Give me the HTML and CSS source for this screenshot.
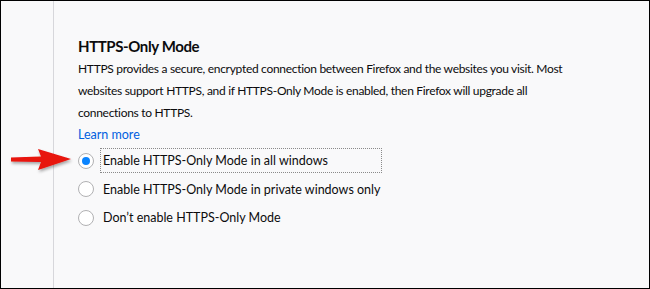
FILE: index.html
```html
<!DOCTYPE html>
<html lang="en">
<head>
  <meta charset="UTF-8" />
  <title>HTTPS-Only Mode</title>
  <link rel="stylesheet" href="styles.css">
</head>
<body>
  <div class="frame">
    <div class="sidebar"></div>
    <div class="content">
      <h2>HTTPS-Only Mode</h2>
      <p class="desc">HTTPS provides a secure, encrypted connection between Firefox and the websites you visit. Most websites support HTTPS, and if HTTPS-Only Mode is enabled, then Firefox will upgrade all connections to HTTPS.</p>
      <a class="learn" href="#">Learn more</a>
      <div class="options">
        <label class="option">
          <span class="radio checked"></span>
          <span class="text focused">Enable HTTPS-Only Mode in all windows</span>
        </label>
        <label class="option">
          <span class="radio"></span>
          <span class="text">Enable HTTPS-Only Mode in private windows only</span>
        </label>
        <label class="option">
          <span class="radio"></span>
          <span class="text">Don’t enable HTTPS-Only Mode</span>
        </label>
      </div>
    </div>

    <!-- annotation arrow -->
    <svg class="arrow" width="68" height="32" viewBox="0 0 68 32">
      <defs>
        <filter id="sh" x="-20%" y="-40%" width="140%" height="180%">
          <feDropShadow dx="1" dy="2" stdDeviation="1.5" flood-color="#000" flood-opacity="0.35" />
        </filter>
      </defs>
      <path d="M2 12.5 L32 11.5 L29 4 L62 14 L29 25 L32 17 L2 16.5 Z" fill="#e8120c" filter="url(#sh)" />
    </svg>
  </div>
</body>
</html>
```

FILE: styles.css
```css
* {
  box-sizing: border-box;
}

body {
  margin: 0;
  font-family: Lato, "Noto Sans", sans-serif;
  color: #0c0c0d;
}

.frame {
  position: relative;
  width: 650px;
  height: 289px;
  border: 1px solid #000;
  background: #f9f9fa;
  display: flex;
}

.sidebar {
  width: 53px;
  border-right: 1px solid #d7d7db;
  flex-shrink: 0;
}

.content {
  padding: 33px 0 0 24px;
}

h2 {
  margin: 0;
  font-size: 15px;
  font-weight: 700;
  letter-spacing: -0.4px;
  line-height: 24px;
}

.desc {
  margin: 0;
  font-size: 12px;
  letter-spacing: -0.3px;
  line-height: 22px;
  width: 500px;
}

.learn {
  display: block;
  font-size: 12.5px;
  line-height: 22px;
  color: #0060df;
  text-decoration: none;
}

.options {
  margin-top: 2px;
  display: flex;
  flex-direction: column;
  gap: 3.5px;
}

.option {
  display: flex;
  align-items: center;
  gap: 6px;
  font-size: 12.5px;
  height: 25px;
}

.radio {
  width: 16px;
  height: 16px;
  border: 1px solid #b1b1b3;
  border-radius: 50%;
  background: #fff;
  flex-shrink: 0;
  display: flex;
  align-items: center;
  justify-content: center;
}

.radio.checked::after {
  content: "";
  width: 8px;
  height: 8px;
  border-radius: 50%;
  background: #0a84ff;
}

.text {
  padding: 0 2px;
  line-height: 23px;
  border: 1px solid transparent;
}

.text.focused {
  width: 282px;
  border: 1px dotted #8a8a8a;
}

.arrow {
  position: absolute;
  left: 8px;
  top: 144px;
}
```
